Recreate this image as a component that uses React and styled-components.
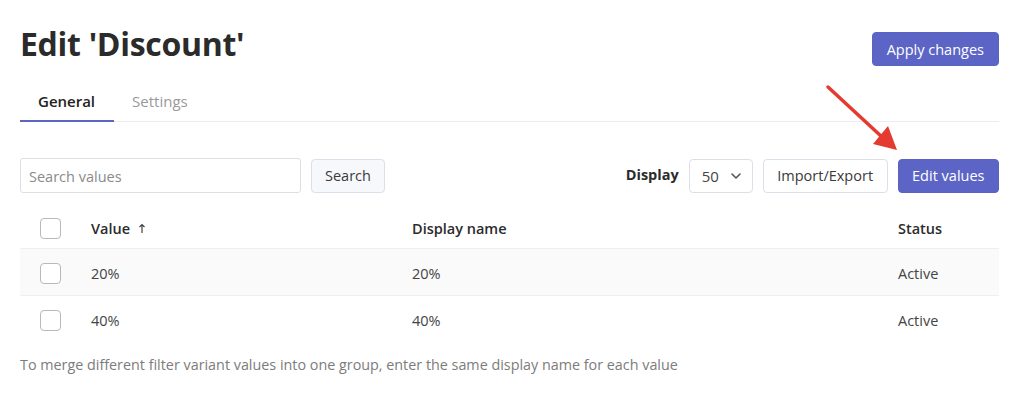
import React from "react";
import styled, { createGlobalStyle } from "styled-components";

const Global = createGlobalStyle`
  html, body { margin: 0; padding: 0; background: #fff; }
  body { font-family: "Open Sans", "Noto Sans", sans-serif; color: #333; }
  * { box-sizing: border-box; }
`;

const Page = styled.div`
  position: relative;
  width: 1024px;
  height: 396px;
  padding: 0 25px 0 20px;
  overflow: hidden;
`;

const Header = styled.div`
  display: flex;
  justify-content: space-between;
  align-items: flex-start;
  padding-top: 22px;
  height: 84px;
`;

const Title = styled.h1`
  margin: 0;
  font-size: 32px;
  font-weight: 700;
  color: #2b2b2b;
  line-height: 44px;
  letter-spacing: -0.3px;
`;

const Button = styled.button`
  font-family: inherit;
  font-size: 14.5px;
  height: 34px;
  padding: 0 ${(p) => (p.$pad ? p.$pad : 14)}px;
  border-radius: 4px;
  cursor: pointer;
  white-space: nowrap;
  border: 1px solid ${(p) => (p.$primary ? "#5a62c4" : "#dcdfe8")};
  background: ${(p) => (p.$primary ? "#5c65c5" : p.$tint ? "#f7f8fb" : "#fff")};
  color: ${(p) => (p.$primary ? "#fff" : "#3a3a3a")};
`;

const ApplyButton = styled(Button)`
  margin-top: 10px;
`;

const Tabs = styled.div`
  display: flex;
  border-bottom: 1px solid #ececf0;
  height: 38px;
`;

const Tab = styled.div`
  font-size: 15px;
  padding: 0 ${(p) => (p.$active ? 19 : 18)}px 0 18px;
  line-height: 34px;
  font-weight: ${(p) => (p.$active ? 600 : 400)};
  color: ${(p) => (p.$active ? "#222" : "#999")};
  border-bottom: 2px solid ${(p) => (p.$active ? "#5c65c5" : "transparent")};
  margin-bottom: -1px;
`;

const Toolbar = styled.div`
  display: flex;
  align-items: center;
  margin-top: 36px;
  gap: 10px;
`;

const SearchInput = styled.input`
  width: 281px;
  height: 35px;
  border: 1px solid #dcdfe6;
  border-radius: 3px;
  padding: 2px 8px 0;
  font-family: inherit;
  font-size: 14.5px;
  color: #333;
  &::placeholder { color: #8a8a8a; }
`;

const Spacer = styled.div`
  flex: 1;
`;

const Label = styled.span`
  font-weight: 700;
  font-size: 14.5px;
  color: #2b2b2b;
  margin-top: -2px;
`;

const Select = styled.div`
  width: 64px;
  height: 34px;
  border: 1px solid #dcdfe6;
  border-radius: 4px;
  display: flex;
  align-items: center;
  justify-content: space-between;
  padding: 0 10px 0 12px;
  font-size: 15px;
  color: #444;
`;

const Table = styled.div`
  margin-top: 16px;
`;

const Row = styled.div`
  display: grid;
  grid-template-columns: 71px 321px 486px 1fr;
  align-items: center;
  height: ${(p) => (p.$head ? 40 : 47)}px;
  padding-top: ${(p) => (p.$head ? 0 : 2)}px;
  border-bottom: ${(p) => (p.$last ? "none" : "1px solid #efeff2")};
  background: ${(p) => (p.$shade ? "#fafafa" : "#fff")};
  font-size: 14.5px;
  color: ${(p) => (p.$head ? "#2b2b2b" : "#444")};
  font-weight: ${(p) => (p.$head ? 600 : 400)};
`;

const Check = styled.span`
  display: block;
  width: 21px;
  height: 21px;
  margin-left: 20px;
  border: 1.5px solid #b9b9b9;
  border-radius: 4px;
  background: #fff;
`;

const Cell = styled.span`
  display: flex;
  align-items: center;
  gap: 8px;
`;

const Note = styled.p`
  margin: 12px 0 0;
  font-size: 14.35px;
  color: #7c7c7c;
`;

const Arrow = styled.svg`
  position: absolute;
  left: 820px;
  top: 80px;
`;

export default function App() {
  return (
    <Page>
      <Global />
      <Header>
        <Title>Edit 'Discount'</Title>
        <ApplyButton $primary>Apply changes</ApplyButton>
      </Header>
      <Tabs>
        <Tab $active>General</Tab>
        <Tab>Settings</Tab>
      </Tabs>
      <Toolbar>
        <SearchInput placeholder="Search values" />
        <Button $tint $pad={13}>Search</Button>
        <Spacer />
        <Label>Display</Label>
        <Select>
          <span>50</span>
          <svg width="12" height="8" viewBox="0 0 12 8">
            <path d="M2 2 L6 6 L10 2" fill="none" stroke="#555" strokeWidth="1.6" strokeLinecap="round" strokeLinejoin="round" />
          </svg>
        </Select>
        <Button $pad={13.5}>Import/Export</Button>
        <Button $primary $pad={13.5}>Edit values</Button>
      </Toolbar>
      <Table>
        <Row $head>
          <Check />
          <Cell>
            Value
            <svg width="8" height="11" viewBox="0 0 8 11">
              <path d="M4 10 V1.5 M1.5 4 L4 1.5 L6.5 4" fill="none" stroke="#444" strokeWidth="1.2" />
            </svg>
          </Cell>
          <Cell>Display name</Cell>
          <Cell>Status</Cell>
        </Row>
        <Row $shade>
          <Check />
          <Cell>20%</Cell>
          <Cell>20%</Cell>
          <Cell>Active</Cell>
        </Row>
        <Row $last>
          <Check />
          <Cell>40%</Cell>
          <Cell>40%</Cell>
          <Cell>Active</Cell>
        </Row>
      </Table>
      <Note>To merge different filter variant values into one group, enter the same display name for each value</Note>
      <Arrow width="80" height="80" viewBox="0 0 80 80">
        <line x1="8" y1="7" x2="62" y2="57" stroke="#e53a30" strokeWidth="3.5" strokeLinecap="round" />
        <polygon points="77,70 53,64 68,46" fill="#e53a30" />
      </Arrow>
    </Page>
  );
}
